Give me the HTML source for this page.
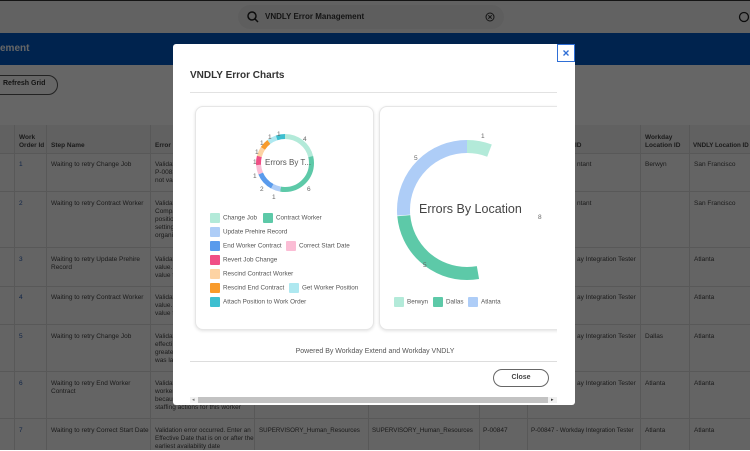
<!DOCTYPE html>
<html><head><meta charset="utf-8"><style>
*{margin:0;padding:0;box-sizing:border-box}
body{width:750px;height:450px;overflow:hidden;position:relative;font-family:"Liberation Sans",sans-serif;background:#fff}
.abs{position:absolute}
.t{position:absolute;font-size:6.5px;color:#444;line-height:8px;white-space:nowrap}
.ov{position:absolute;left:0;top:0;width:750px;height:450px;background:rgba(0,0,0,0.6)}
.modal{position:absolute;left:173px;top:44px;width:402px;height:361px;background:#fff;border-radius:3px}
.card{position:absolute;background:#fff;border:1px solid #e6e6e6;border-radius:8px;box-shadow:0 1px 3px rgba(0,0,0,0.12)}
.lg{position:absolute;font-size:6.3px;color:#555;line-height:10px;white-space:nowrap}
.lg i{display:inline-block;width:10px;height:10px;vertical-align:middle;margin-right:3px;border-radius:1px}
.n{position:absolute;font-size:6.5px;color:#666}
</style></head><body>
<div class="abs" style="left:0;top:0;width:750px;height:33px;background:#f6f6f6;border-top:1px solid #333"></div>
<div class="abs" style="left:238px;top:5px;width:266px;height:24px;border-radius:12px;background:#ececec"></div>
<svg class="abs" style="left:247px;top:11px" width="12" height="12"><circle cx="5" cy="5" r="4" fill="none" stroke="#222" stroke-width="1.5"/><path d="M8 8l3 3" stroke="#222" stroke-width="1.5"/></svg>
<div class="abs" style="left:265px;top:12px;font-size:8px;font-weight:bold;color:#333">VNDLY Error Management</div>
<svg class="abs" style="left:485px;top:12px" width="10" height="10"><circle cx="5" cy="5" r="4" fill="none" stroke="#333" stroke-width="1"/><path d="M3.3 3.3l3.4 3.4M6.7 3.3l-3.4 3.4" stroke="#333"/></svg>
<svg class="abs" style="left:738px;top:11px" width="12" height="12"><circle cx="6" cy="6" r="4.5" fill="none" stroke="#222" stroke-width="1.3"/></svg>
<div class="abs" style="left:0;top:33px;width:750px;height:32px;background:#0059c2"></div>
<div class="abs" style="left:0;top:43px;font-size:10px;font-weight:bold;color:#fff">ement</div>
<div class="abs" style="left:-20px;top:75px;width:78px;height:20px;border:1px solid #555;border-radius:10px;background:#fff"></div>
<div class="abs" style="left:3px;top:80px;font-size:7px;font-weight:bold;color:#333">Refresh Grid</div>
<div class="abs" style="left:0;top:125px;width:750px;height:28px;background:#f2f2f2"></div>
<div class="abs" style="left:0;top:153px;width:750px;height:297px;background:#fafafa"></div>
<div class="abs" style="left:14px;top:125px;width:1px;height:325px;background:#ddd"></div>
<div class="abs" style="left:46px;top:125px;width:1px;height:325px;background:#ddd"></div>
<div class="abs" style="left:150px;top:125px;width:1px;height:325px;background:#ddd"></div>
<div class="abs" style="left:254px;top:125px;width:1px;height:325px;background:#ddd"></div>
<div class="abs" style="left:368px;top:380px;width:1px;height:70px;background:#ddd"></div>
<div class="abs" style="left:479px;top:380px;width:1px;height:70px;background:#ddd"></div>
<div class="abs" style="left:527px;top:125px;width:1px;height:325px;background:#ddd"></div>
<div class="abs" style="left:640px;top:125px;width:1px;height:325px;background:#ddd"></div>
<div class="abs" style="left:689px;top:125px;width:1px;height:325px;background:#ddd"></div>
<div class="abs" style="left:0;top:153px;width:750px;height:1px;background:#ddd"></div>
<div class="abs" style="left:0;top:191px;width:750px;height:1px;background:#ddd"></div>
<div class="abs" style="left:0;top:247px;width:750px;height:1px;background:#ddd"></div>
<div class="abs" style="left:0;top:286px;width:750px;height:1px;background:#ddd"></div>
<div class="abs" style="left:0;top:324px;width:750px;height:1px;background:#ddd"></div>
<div class="abs" style="left:0;top:371px;width:750px;height:1px;background:#ddd"></div>
<div class="abs" style="left:0;top:418px;width:750px;height:1px;background:#ddd"></div>
<div class="t" style="left:19px;top:134px;font-weight:bold">Work<br>Order Id</div>
<div class="t" style="left:51px;top:142px;font-weight:bold">Step Name</div>
<div class="t" style="left:155px;top:142px;font-weight:bold">Error M</div>
<div class="t" style="left:575px;top:142px;font-weight:bold">ID</div>
<div class="t" style="left:645px;top:134px;font-weight:bold">Workday<br>Location ID</div>
<div class="t" style="left:693px;top:142px;font-weight:bold;font-size:6.2px">VNDLY Location ID</div>
<div class="t" style="left:19px;top:161px;color:#2a5db0">1</div><div class="t" style="left:51px;top:161px">Waiting to retry Change Job</div>
<div class="t" style="left:19px;top:200px;color:#2a5db0">2</div><div class="t" style="left:51px;top:200px">Waiting to retry Contract Worker</div>
<div class="t" style="left:19px;top:256px;color:#2a5db0">3</div><div class="t" style="left:51px;top:256px">Waiting to retry Update Prehire<br>Record</div>
<div class="t" style="left:19px;top:294px;color:#2a5db0">4</div><div class="t" style="left:51px;top:294px">Waiting to retry Contract Worker</div>
<div class="t" style="left:19px;top:333px;color:#2a5db0">5</div><div class="t" style="left:51px;top:333px">Waiting to retry Change Job</div>
<div class="t" style="left:19px;top:380px;color:#2a5db0">6</div><div class="t" style="left:51px;top:380px">Waiting to retry End Worker<br>Contract</div>
<div class="t" style="left:19px;top:427px;color:#2a5db0">7</div><div class="t" style="left:51px;top:427px">Waiting to retry Correct Start Date</div>
<div class="t" style="left:155px;top:161px">Validat<br>P-0083<br>not val</div>
<div class="t" style="left:155px;top:200px">Validat<br>Compa<br>positio<br>setting<br>organi</div>
<div class="t" style="left:155px;top:256px">Validat<br>value.<br>value f</div>
<div class="t" style="left:155px;top:294px">Validat<br>value.<br>value f</div>
<div class="t" style="left:155px;top:333px">Validat<br>effecti<br>greate<br>was la</div>
<div class="t" style="left:155px;top:380px">Validat<br>worker<br>becaus<br>staffing actions for this worker</div>
<div class="t" style="left:155px;top:427px;font-size:6.3px">Validation error occurred. Enter an<br>Effective Date that is on or after the<br>earliest availability date</div>
<div class="t" style="left:259px;top:427px;font-size:6.2px">SUPERVISORY_Human_Resources</div>
<div class="t" style="left:372px;top:427px;font-size:6.2px">SUPERVISORY_Human_Resources</div>
<div class="t" style="left:483px;top:427px">P-00847</div>
<div class="t" style="left:531px;top:427px;font-size:6.2px">P-00847 - Workday Integration Tester</div>
<div class="t" style="left:577px;top:161px">ntant</div><div class="t" style="left:577px;top:200px">ntant</div>
<div class="t" style="left:577px;top:256px">ay Integration Tester</div>
<div class="t" style="left:577px;top:294px">ay Integration Tester</div>
<div class="t" style="left:577px;top:333px">ay Integration Tester</div>
<div class="t" style="left:577px;top:380px">ay Integration Tester</div>
<div class="t" style="left:645px;top:161px">Berwyn</div><div class="t" style="left:694px;top:161px">San Francisco</div>
<div class="t" style="left:694px;top:200px">San Francisco</div>
<div class="t" style="left:694px;top:256px">Atlanta</div><div class="t" style="left:694px;top:294px">Atlanta</div>
<div class="t" style="left:645px;top:333px">Dallas</div><div class="t" style="left:694px;top:333px">Atlanta</div>
<div class="t" style="left:645px;top:380px">Atlanta</div><div class="t" style="left:694px;top:380px">Atlanta</div>
<div class="t" style="left:645px;top:427px">Atlanta</div><div class="t" style="left:694px;top:427px">Atlanta</div>
<div class="ov"></div>
<div class="modal"></div>
<div class="abs" style="left:557px;top:44px;width:18px;height:18px;border:1.5px solid #2f6fd6;background:#fff"></div>
<svg class="abs" style="left:562px;top:49px" width="8" height="8"><path d="M1.5 1.5l5 5M6.5 1.5l-5 5" stroke="#2f6fd6" stroke-width="1.3"/></svg>
<div class="abs" style="left:190px;top:70px;font-size:10px;font-weight:bold;color:#333">VNDLY Error Charts</div>
<div class="abs" style="left:190px;top:92px;width:367px;height:1px;background:#e2e2e2"></div>
<div class="card" style="left:195px;top:106px;width:179px;height:224px"></div>
<div class="card" style="left:379px;top:106px;width:190px;height:224px;border-right:none;border-radius:8px 0 0 8px"></div>
<div class="abs" style="left:557px;top:100px;width:18px;height:240px;background:#fff"></div>
<svg class="abs" style="left:0;top:0" width="750" height="450">
<g transform="rotate(-90 285 163)" fill="none" stroke-width="5">
<circle cx="285" cy="163" r="26.5" stroke="#b3ead9" stroke-dasharray="35.05 200" stroke-dashoffset="0"/>
<circle cx="285" cy="163" r="26.5" stroke="#5dc9a8" stroke-dasharray="52.58 200" stroke-dashoffset="-35.05"/>
<circle cx="285" cy="163" r="26.5" stroke="#aecdf7" stroke-dasharray="8.76 200" stroke-dashoffset="-87.63"/>
<circle cx="285" cy="163" r="26.5" stroke="#5a9bec" stroke-dasharray="17.53 200" stroke-dashoffset="-96.39"/>
<circle cx="285" cy="163" r="26.5" stroke="#fbbdd5" stroke-dasharray="8.76 200" stroke-dashoffset="-113.92"/>
<circle cx="285" cy="163" r="26.5" stroke="#f04f86" stroke-dasharray="8.76 200" stroke-dashoffset="-122.68"/>
<circle cx="285" cy="163" r="26.5" stroke="#fdd3a3" stroke-dasharray="8.76 200" stroke-dashoffset="-131.44"/>
<circle cx="285" cy="163" r="26.5" stroke="#f89b2c" stroke-dasharray="8.76 200" stroke-dashoffset="-140.2"/>
<circle cx="285" cy="163" r="26.5" stroke="#aee8f0" stroke-dasharray="8.76 200" stroke-dashoffset="-148.96"/>
<circle cx="285" cy="163" r="26.5" stroke="#3dbfd0" stroke-dasharray="8.76 200" stroke-dashoffset="-157.72"/>
</g>
<g transform="rotate(-90 467 210)" fill="none" stroke-width="13">
<circle cx="467" cy="210" r="63.5" stroke="#b3ead9" stroke-dasharray="23 500" stroke-dashoffset="0"/>
<circle cx="467" cy="210" r="63.5" stroke="#5dc9a8" stroke-dasharray="105 500" stroke-dashoffset="-188.4"/>
<circle cx="467" cy="210" r="63.5" stroke="#aecdf7" stroke-dasharray="105 500" stroke-dashoffset="-294"/>
</g>
</svg>
<div class="abs" style="left:265px;top:158px;font-size:8px;color:#555">Errors By T...</div>
<div class="n" style="left:303px;top:136px">4</div><div class="n" style="left:307px;top:186px">6</div>
<div class="n" style="left:272px;top:194px">1</div><div class="n" style="left:260px;top:186px">2</div>
<div class="n" style="left:253px;top:173px">1</div><div class="n" style="left:253px;top:159px">1</div>
<div class="n" style="left:255px;top:149px">1</div><div class="n" style="left:260px;top:140px">1</div>
<div class="n" style="left:268px;top:134px">1</div><div class="n" style="left:277px;top:131px">1</div>
<div class="lg" style="left:210px;top:213px"><i style="background:#b3ead9"></i>Change Job</div>
<div class="lg" style="left:263px;top:213px"><i style="background:#5dc9a8"></i>Contract Worker</div>
<div class="lg" style="left:210px;top:227px"><i style="background:#aecdf7"></i>Update Prehire Record</div>
<div class="lg" style="left:210px;top:241px"><i style="background:#5a9bec"></i>End Worker Contract</div>
<div class="lg" style="left:286px;top:241px"><i style="background:#fbbdd5"></i>Correct Start Date</div>
<div class="lg" style="left:210px;top:255px"><i style="background:#f04f86"></i>Revert Job Change</div>
<div class="lg" style="left:210px;top:269px"><i style="background:#fdd3a3"></i>Rescind Contract Worker</div>
<div class="lg" style="left:210px;top:283px"><i style="background:#f89b2c"></i>Rescind End Contract</div>
<div class="lg" style="left:289px;top:283px"><i style="background:#aee8f0"></i>Get Worker Position</div>
<div class="lg" style="left:210px;top:297px"><i style="background:#3dbfd0"></i>Attach Position to Work Order</div>
<div class="abs" style="left:419px;top:202px;font-size:12.5px;color:#444">Errors By Location</div>
<div class="n" style="left:481px;top:133px">1</div><div class="n" style="left:414px;top:155px">5</div>
<div class="n" style="left:538px;top:214px">8</div><div class="n" style="left:423px;top:262px">5</div>
<div class="lg" style="left:394px;top:297px"><i style="background:#b3ead9"></i>Berwyn</div>
<div class="lg" style="left:433px;top:297px"><i style="background:#5dc9a8"></i>Dallas</div>
<div class="lg" style="left:468px;top:297px"><i style="background:#aecdf7"></i>Atlanta</div>
<div class="abs" style="left:190px;top:348px;width:370px;text-align:center;font-size:7px;color:#555">Powered By Workday Extend and Workday VNDLY</div>
<div class="abs" style="left:190px;top:361px;width:367px;height:1px;background:#ddd"></div>
<div class="abs" style="left:493px;top:369px;width:56px;height:18px;border:1px solid #666;border-radius:9px;text-align:center;font-size:7px;font-weight:bold;color:#444;line-height:16px">Close</div>
<div class="abs" style="left:190px;top:397px;width:367px;height:6px;background:#f0f0f0"></div>
<div class="abs" style="left:198px;top:397px;width:350px;height:6px;background:#c2c2c2"></div>
<div class="abs" style="left:192px;top:397px;font-size:5px;color:#777">◂</div>
<div class="abs" style="left:551px;top:397px;font-size:5px;color:#333">▸</div>
</body></html>
